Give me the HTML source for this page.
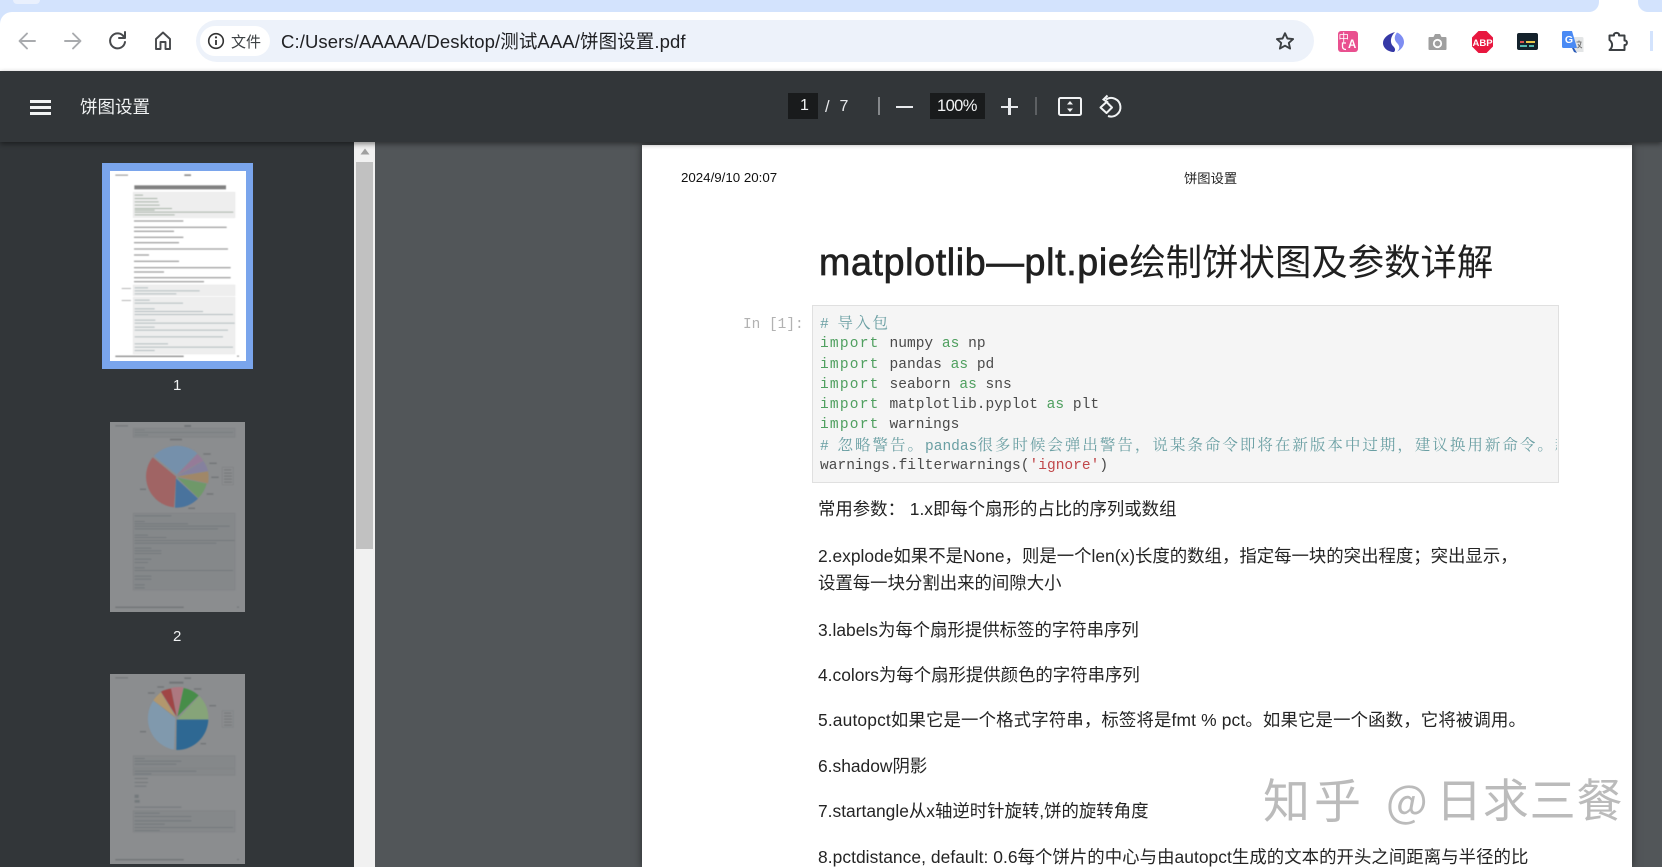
<!DOCTYPE html>
<html lang="zh"><head><meta charset="utf-8"><title>饼图设置</title>
<style>
html,body{margin:0;padding:0;width:1662px;height:867px;overflow:hidden;background:#525659}
body{position:relative;font-family:"Liberation Sans","Noto Sans CJK SC",sans-serif}
.a{position:absolute}
.t{position:absolute;white-space:pre;line-height:1}
.p{font-size:17.4px;color:#242424;left:818px}
.c{font-family:"Liberation Mono","Noto Serif CJK SC",monospace;font-size:14.55px;color:#4a4a4a;left:820px}
.c i{font-style:normal;font-family:"Noto Serif CJK SC",serif;font-size:15.5px;letter-spacing:2px}
.k{color:#4f9f5f}.n{color:#6a9fa3}.s{color:#c0474a}
.k.im{letter-spacing:1.2px}
.w{font-size:47px;color:#bbbbbb;font-family:'WenQuanYi Zen Hei','Noto Sans CJK SC',sans-serif;top:774px}
svg{position:absolute;overflow:visible}
</style></head><body>

<!-- browser top -->
<div class="a" style="left:0;top:0;width:1662px;height:71px;background:#fff"></div>
<div class="a" style="left:0;top:0;width:1599px;height:12px;background:#d3e3fd;border-bottom-right-radius:10px"></div>
<div class="a" style="left:1638px;top:0;width:24px;height:12px;background:#d3e3fd;border-bottom-left-radius:10px"></div>
<div class="a" style="left:13px;top:0;width:27px;height:4px;background:#e9f0fd;border-radius:0 0 6px 6px"></div>
<div class="a" style="left:0;top:12px;width:12px;height:12px;background:#d3e3fd"></div>
<div class="a" style="left:0;top:12px;width:12px;height:12px;background:#fff;border-top-left-radius:12px"></div>

<svg style="left:0;top:0" width="340" height="71" fill="none" stroke-linecap="round" stroke-linejoin="round">
<path d="M35 41H20M27 33.500L19.500 41l7.500 7.500" stroke="#a9abae" stroke-width="1.900"/>
<path d="M65 41H80M73 33.500L80.500 41 73 48.500" stroke="#a9abae" stroke-width="1.900"/>
<path d="M124 37a7.500 7.500 0 1 0 1 5" stroke="#47494c" stroke-width="2"/>
<path d="M125 32v6h-6" stroke="#47494c" stroke-width="2"/>
<path d="M156 39l7-6.500 7 6.500v10h-4.500v-7h-5v7H156z" stroke="#47494c" stroke-width="1.900"/>
</svg>

<div class="a" style="left:196px;top:20px;width:1118px;height:42px;background:#edf2fa;border-radius:21px"></div>
<div class="a" style="left:200px;top:26px;width:70px;height:30px;background:#fff;border-radius:15px"></div>
<svg style="left:207px;top:32px" width="18" height="18" fill="none"><circle cx="9" cy="9" r="7.300" stroke="#333" stroke-width="1.600"/><path d="M9 8v5" stroke="#333" stroke-width="1.800"/><circle cx="9" cy="5.400" r="1.100" fill="#333"/></svg>
<div class="t" style="left:231px;top:35px;font-size:15px;color:#3c4043">文件</div>
<div class="t" id="url" style="left:281px;top:33px;font-size:18.500px;color:#202124;letter-spacing:.1px">C:/Users/AAAAA/Desktop/测试AAA/饼图设置.pdf</div>
<svg style="left:1275px;top:31px" width="20" height="20" fill="none"><path d="M10 2.200l2.400 5.300 5.700.6-4.300 3.800 1.300 5.700L10 14.700l-5.100 2.900 1.300-5.700L1.900 8.100l5.700-.6z" stroke="#3c4043" stroke-width="1.900" stroke-linejoin="round"/></svg>

<!-- extension icons -->
<div class="a" style="left:1338px;top:31px;width:20px;height:21px;background:#e9508f;border-radius:3px"></div>
<div class="t" style="left:1338.500px;top:32.500px;font-size:10.500px;color:#fff">中</div>
<div class="t" style="left:1348px;top:40px;font-size:11.500px;font-weight:bold;color:#fff">A</div>
<svg style="left:1340px;top:42px" width="8" height="10" fill="none"><path d="M6 1H2.500v3.500c0 2 1.500 3 3.500 3" stroke="#fff" stroke-width="1.300"/></svg>
<svg style="left:1382px;top:31px" width="22" height="22"><path d="M13 1C6 3 1 7 1 12c0 5 5 9 11 9 2-2 1-4-1-6C8 12 8 6 13 1z" fill="#3538a6"/><path d="M15 1.500c-3 3.500-3 7.500 0 10.500 3 3 3 6 0 8.500 4-1.500 7-5.500 7-9.500 0-4-3-8-7-9.500z" fill="#7e8df2"/></svg>
<svg style="left:1428px;top:33px" width="19" height="18"><path d="M1.500 4h4l1.500-3h5l1.500 3h4a1 1 0 0 1 1 1v11a1 1 0 0 1-1 1H1.500a1 1 0 0 1-1-1V5a1 1 0 0 1 1-1z" fill="#9f9f9f"/><circle cx="9.500" cy="10.500" r="3.700" fill="none" stroke="#fff" stroke-width="1.800"/></svg>
<svg style="left:1472px;top:31px" width="21" height="22"><path d="M6.500 0h8L21 6.500v9L14.500 22h-8L0 15.500v-9z" fill="#e8173f"/><text x="10.500" y="15" text-anchor="middle" font-family="Liberation Sans,sans-serif" font-weight="bold" font-size="9.500" fill="#fff">ABP</text></svg>
<svg style="left:1517px;top:33px" width="21" height="18"><rect width="21" height="17" rx="2" fill="#14222c"/><rect x="3" y="8" width="4" height="2" fill="#d8534f"/><rect x="9" y="8" width="9" height="2" fill="#e8c64a"/><rect x="3" y="12" width="7" height="2" fill="#56b9b0"/><rect x="12" y="12" width="5" height="2" fill="#56b9b0"/></svg>
<svg style="left:1562px;top:31px" width="22" height="23"><path d="M10 6h10a1.500 1.500 0 0 1 1.500 1.500V21H12z" fill="#e3e5e6"/><path d="M14.500 11h5M17 9.500v1.500M15.500 17c2-1 3-3 3.500-6M16 13c1 2 2 3 4 4" stroke="#777" stroke-width="1" fill="none"/><path d="M1.500 0H10l5 17H1.500A1.500 1.500 0 0 1 0 15.500v-14A1.500 1.500 0 0 1 1.500 0z" fill="#4a8af4"/><path d="M12 17l3 5-3-1-2-4z" fill="#2a5bb8"/><text x="7" y="12" text-anchor="middle" font-family="Liberation Sans,sans-serif" font-weight="bold" font-size="10.500" fill="#fff">G</text></svg>
<svg style="left:1607px;top:30px" width="21" height="22" fill="none"><path d="M2.500 5.500h4.500c-.8-3.500 5.800-3.500 5 0h5.500v5c3.200-.6 3.200 5 0 4.500v5h-15c1.500-1.200 2.600-3 2.600-5 0-2-1.100-3.800-2.600-5z" stroke="#3c4043" stroke-width="2" stroke-linejoin="round"/></svg>
<div class="a" style="left:1650px;top:31px;width:2.500px;height:20px;background:#d3e3fd"></div>

<!-- pdf toolbar -->
<div class="a" style="left:0;top:71px;width:1662px;height:71px;background:#323639;box-shadow:0 2px 5px rgba(0,0,0,.45);z-index:5"></div>
<div style="position:absolute;left:0;top:0;width:1662px;height:867px;z-index:6">
<div class="a" style="left:30px;top:100px;width:21px;height:2.600px;background:#f1f3f4"></div>
<div class="a" style="left:30px;top:106px;width:21px;height:2.600px;background:#f1f3f4"></div>
<div class="a" style="left:30px;top:112px;width:21px;height:2.600px;background:#f1f3f4"></div>
<div class="t" style="left:80px;top:99px;font-size:17.500px;color:#f1f3f4">饼图设置</div>
<div class="a" style="left:788px;top:93px;width:30px;height:26px;background:#191b1c"></div>
<div class="t" style="left:800px;top:98px;font-size:16px;color:#f1f3f4">1</div>
<div class="t" style="left:825px;top:98.500px;font-size:16.500px;color:#e8eaed">/</div>
<div class="t" style="left:839.500px;top:98.500px;font-size:16px;color:#e8eaed">7</div>
<div class="a" style="left:878px;top:97px;width:1.500px;height:18px;background:#85888b"></div>
<div class="a" style="left:896px;top:105.500px;width:17px;height:2.200px;background:#e8eaed"></div>
<div class="a" style="left:930px;top:93px;width:55px;height:26px;background:#191b1c"></div>
<div class="t" style="left:937px;top:98px;font-size:16.500px;color:#f1f3f4;letter-spacing:-.6px">100%</div>
<div class="a" style="left:1001px;top:105.500px;width:17px;height:2.200px;background:#e8eaed"></div>
<div class="a" style="left:1008.400px;top:98px;width:2.200px;height:17px;background:#e8eaed"></div>
<div class="a" style="left:1035px;top:97px;width:1.500px;height:18px;background:#5d6063"></div>
<svg style="left:1057px;top:96px" width="26" height="21" fill="none"><rect x="2" y="2" width="22" height="17" rx="1.500" stroke="#f1f3f4" stroke-width="2"/><path d="M13 5l-3 3.500h6zM13 16l-3-3.500h6z" fill="#f1f3f4"/></svg>
<svg style="left:1098px;top:94px" width="24" height="24" fill="none"><path d="M8 5.500a9.300 9.300 0 1 1 2 16.500" stroke="#f1f3f4" stroke-width="2"/><path d="M9.500 1.500L5.500 5.500l4.500 3" stroke="#f1f3f4" stroke-width="2"/><path d="M8.500 8l5.500 5.500-5.500 5.500L2.500 13.500z" stroke="#f1f3f4" stroke-width="2" stroke-linejoin="round"/></svg>
</div>

<!-- sidebar -->
<div class="a" style="left:0;top:142px;width:354px;height:725px;background:#323639"></div>
<div class="a" style="left:354px;top:142px;width:21px;height:725px;background:#f1f1f1"></div>
<div class="a" style="left:356px;top:162px;width:17px;height:387px;background:#c1c1c1"></div>
<svg style="left:360px;top:148px" width="10" height="7"><path d="M5 0.500L9.500 6.500H.5z" fill="#a0a0a0"/></svg>

<!-- thumb 1 -->
<div class="a" style="left:102px;top:163px;width:151px;height:206px;background:#7aa5ec"></div>
<div class="a" style="left:110px;top:171px;width:136px;height:190px;background:#fff"></div>
<svg style="left:90px;top:150px;filter:blur(.55px)" width="180" height="250" viewBox="0 0 540 750">
<g fill="#8c8c8c">
<rect x="76" y="74" width="38" height="3"/><rect x="283" y="73" width="20" height="5"/>
</g>
<rect x="133" y="106" width="275" height="12" fill="#808080"/>
<rect x="130" y="127" width="305" height="76" fill="#eeeeee" stroke="#ddd"/>
<g fill="#aab5aa"><rect x="134" y="134" width="25" height="3"/><rect x="134" y="144" width="68" height="3"/><rect x="134" y="154" width="72" height="3"/><rect x="134" y="164" width="75" height="3"/><rect x="134" y="174" width="112" height="3"/><rect x="134" y="179" width="60" height="3"/><rect x="134" y="185" width="296" height="3"/><rect x="134" y="193" width="120" height="3"/></g>
<g fill="#a2a2a2">
<rect x="132" y="211" width="148" height="4"/><rect x="132" y="230" width="278" height="4"/><rect x="132" y="242" width="120" height="4"/><rect x="132" y="260" width="148" height="4"/><rect x="132" y="276" width="135" height="4"/><rect x="132" y="295" width="282" height="4"/><rect x="132" y="313" width="45" height="4"/><rect x="132" y="332" width="135" height="4"/><rect x="132" y="351" width="290" height="4"/><rect x="132" y="364" width="90" height="4"/><rect x="132" y="381" width="290" height="4"/><rect x="132" y="393" width="210" height="4"/>
</g>
<rect x="130" y="405" width="305" height="32" fill="#eeeeee" stroke="#ddd"/>
<rect x="130" y="442" width="305" height="170" fill="#eeeeee" stroke="#ddd"/>
<g fill="#b5b5b5"><rect x="95" y="414" width="28" height="3"/><rect x="95" y="450" width="28" height="3"/></g>
<g fill="#b3bcbf"><rect x="134" y="412" width="40" height="3"/><rect x="134" y="421" width="195" height="3"/><rect x="134" y="430" width="125" height="3"/><rect x="134" y="449" width="45" height="3"/><rect x="134" y="458" width="145" height="3"/><rect x="134" y="475" width="60" height="3"/><rect x="134" y="483" width="205" height="3"/><rect x="134" y="492" width="295" height="3"/><rect x="134" y="509" width="62" height="3"/><rect x="134" y="518" width="300" height="3"/><rect x="134" y="530" width="60" height="3"/><rect x="134" y="539" width="280" height="3"/><rect x="134" y="559" width="265" height="3"/><rect x="134" y="580" width="100" height="3"/><rect x="134" y="590" width="295" height="3"/><rect x="134" y="600" width="60" height="3"/></g>
<rect x="76" y="617" width="205" height="4" fill="#8a8a8a"/><rect x="441" y="617" width="6" height="3" fill="#888"/>
</svg>
<div class="t" style="left:173px;top:378px;font-size:15px;color:#f1f3f4">1</div>

<!-- thumb 2 -->
<div class="a" style="left:110px;top:422px;width:135px;height:190px;background:#8b8d8f"></div>
<svg style="left:90px;top:410px;filter:blur(.55px)" width="180" height="250" viewBox="0 0 540 750">
<g fill="#717476"><rect x="76" y="46" width="38" height="3"/><rect x="283" y="45" width="20" height="6"/><rect x="76" y="590" width="205" height="4"/><rect x="441" y="590" width="6" height="3"/></g>
<rect x="130" y="55" width="305" height="27" fill="#85888a" stroke="#797c7e"/>
<g fill="#74797c"><rect x="134" y="59" width="30" height="2"/><rect x="134" y="66" width="295" height="2"/><rect x="134" y="74" width="40" height="2"/></g>
<path d="M260 194L192 138A93 93 0 0 1 322 130Z" fill="#7590ab"/>
<path d="M262 194L322 132A93 93 0 0 1 340 152Z" fill="#957b98"/>
<path d="M262 198L340 153A93 93 0 0 1 354 183Z" fill="#85819e"/>
<path d="M262 200L354 184A93 93 0 0 1 354 220Z" fill="#a08768"/>
<path d="M262 203L350 221A93 93 0 0 1 325 264Z" fill="#6f9869"/>
<path d="M258 205L324 266A93 93 0 0 1 255 293Z" fill="#49739d"/>
<path d="M258 200L252 292A93 93 0 0 1 188 142Z" fill="#a06464"/>
<g fill="#717476"><rect x="240" y="86" width="36" height="5"/><rect x="340" y="130" width="22" height="4"/><rect x="358" y="158" width="22" height="4"/><rect x="364" y="200" width="22" height="4"/><rect x="350" y="250" width="20" height="4"/><rect x="295" y="293" width="20" height="4"/><rect x="150" y="236" width="18" height="4"/></g>
<rect x="397" y="172" width="33" height="52" fill="#8b8d8f" stroke="#777a7c"/>
<g fill="#75787a"><rect x="402" y="178" width="22" height="3"/><rect x="402" y="188" width="24" height="3"/><rect x="402" y="197" width="24" height="3"/><rect x="402" y="206" width="24" height="3"/><rect x="402" y="215" width="24" height="3"/></g>
<rect x="130" y="310" width="305" height="230" fill="#85888a" stroke="#797c7e"/>
<g fill="#74797c"><rect x="134" y="316" width="110" height="3"/><rect x="134" y="333" width="30" height="3"/><rect x="134" y="340" width="160" height="3"/><rect x="134" y="347" width="285" height="3"/><rect x="134" y="355" width="250" height="3"/><rect x="134" y="374" width="40" height="3"/><rect x="134" y="381" width="95" height="3"/><rect x="134" y="390" width="300" height="3"/><rect x="134" y="398" width="245" height="3"/><rect x="134" y="413" width="50" height="3"/><rect x="134" y="421" width="80" height="3"/><rect x="134" y="429" width="80" height="3"/><rect x="134" y="446" width="50" height="3"/><rect x="134" y="456" width="40" height="3"/><rect x="134" y="472" width="30" height="3"/><rect x="134" y="480" width="295" height="3"/><rect x="134" y="497" width="50" height="3"/><rect x="134" y="506" width="50" height="3"/><rect x="134" y="523" width="30" height="3"/><rect x="134" y="532" width="30" height="3"/></g>
</svg>
<div class="t" style="left:173px;top:629px;font-size:15px;color:#f1f3f4">2</div>

<!-- thumb 3 -->
<div class="a" style="left:110px;top:674px;width:135px;height:190px;background:#8b8d8f"></div>
<svg style="left:90px;top:660px;filter:blur(.55px)" width="180" height="207" viewBox="0 0 540 621">
<g fill="#717476"><rect x="76" y="52" width="38" height="3"/><rect x="283" y="52" width="20" height="5"/><rect x="238" y="65" width="42" height="6"/><rect x="76" y="597" width="205" height="4"/><rect x="441" y="597" width="6" height="3"/></g>
<path d="M256 174L190 122A95 95 0 0 0 252 269Z" fill="#8099ad"/>
<path d="M260 179H355A95 95 0 0 1 259 270Z" fill="#2e6893"/>
<path d="M262 178L328 108A95 95 0 0 1 355 178Z" fill="#86a479"/>
<path d="M262 170L326 106A95 95 0 0 0 281 84Z" fill="#478d49"/>
<path d="M262 170L280 82A95 95 0 0 0 243 84Z" fill="#ad7880"/>
<path d="M260 170L243 86A95 95 0 0 0 213 95Z" fill="#a04545"/>
<path d="M258 172L213 97A95 95 0 0 0 190 121Z" fill="#b2976d"/>
<g fill="#717476"><rect x="202" y="79" width="20" height="4"/><rect x="174" y="97" width="20" height="4"/><rect x="312" y="85" width="22" height="4"/><rect x="358" y="135" width="20" height="4"/><rect x="150" y="213" width="18" height="4"/><rect x="332" y="249" width="16" height="4"/></g>
<rect x="397" y="152" width="33" height="50" fill="#8b8d8f" stroke="#797c7e"/>
<g fill="#75787a"><rect x="402" y="158" width="22" height="3"/><rect x="402" y="167" width="24" height="3"/><rect x="402" y="176" width="24" height="3"/><rect x="402" y="185" width="24" height="3"/><rect x="402" y="194" width="24" height="3"/></g>
<rect x="130" y="287" width="305" height="36" fill="#85888a" stroke="#797c7e"/>
<rect x="130" y="326" width="305" height="20" fill="#85888a" stroke="#797c7e"/>
<rect x="130" y="452" width="305" height="64" fill="#85888a" stroke="#797c7e"/>
<g fill="#74797c"><rect x="134" y="294" width="30" height="3"/><rect x="134" y="302" width="140" height="3"/><rect x="134" y="311" width="125" height="3"/><rect x="134" y="332" width="185" height="3"/><rect x="134" y="340" width="50" height="3"/><rect x="134" y="354" width="40" height="3"/><rect x="134" y="366" width="40" height="3"/><rect x="134" y="377" width="35" height="3"/><rect x="134" y="404" width="12" height="10"/><rect x="134" y="420" width="15" height="8"/><rect x="134" y="440" width="140" height="3"/><rect x="134" y="458" width="75" height="3"/><rect x="134" y="468" width="170" height="3"/><rect x="134" y="481" width="170" height="3"/><rect x="134" y="491" width="90" height="3"/><rect x="134" y="501" width="295" height="3"/><rect x="134" y="510" width="75" height="3"/></g>
</svg>

<!-- page -->
<div class="a" style="left:642px;top:145px;width:990px;height:722px;background:#fff;box-shadow:0 0 8px rgba(0,0,0,.5)"></div>
<div class="t" style="left:681px;top:170.500px;font-size:13.300px;color:#111">2024/9/10 20:07</div>
<div class="t" style="left:1184px;top:171.500px;font-size:13.300px;color:#222">饼图设置</div>
<div class="t" style="left:819px;top:244px;font-size:36.400px;color:#202020"><span style="font-size:37.600px;-webkit-text-stroke:.7px #202020;letter-spacing:.65px">matplotlib—plt.pie</span>绘制饼状图及参数详解</div>

<div class="t" style="left:743px;top:318px;font-family:'Liberation Mono',monospace;font-size:14.450px;color:#b2b2b2">In [1]:</div>
<div class="a" style="left:812px;top:305px;width:745px;height:176px;background:#f5f5f5;border:1px solid #e0e0e0;overflow:hidden"></div>
<div class="t c" style="top:315px"><span class="n"># <i>导入包</i></span></div>
<div class="t c" style="top:337px"><span class="k im">import </span>numpy <span class="k">as</span> np</div>
<div class="t c" style="top:358px"><span class="k im">import </span>pandas <span class="k">as</span> pd</div>
<div class="t c" style="top:378px"><span class="k im">import </span>seaborn <span class="k">as</span> sns</div>
<div class="t c" style="top:398px"><span class="k im">import </span>matplotlib.pyplot <span class="k">as</span> plt</div>
<div class="t c" style="top:418px"><span class="k im">import </span>warnings</div>
<div class="t c" style="top:437px;width:737px;overflow:hidden;height:18px"><span class="n"># <i>忽略警告。</i>pandas<i>很多时候会弹出警告，说某条命令即将在新版本中过期，建议换用新命令。新</i></span></div>
<div class="t c" style="top:459px">warnings.filterwarnings(<span class="s">'ignore'</span>)</div>

<div class="t p" style="top:501px">常用参数： 1.x即每个扇形的占比的序列或数组</div>
<div class="t p" style="top:548px">2.explode如果不是None，则是一个len(x)长度的数组，指定每一块的突出程度；突出显示，</div>
<div class="t p" style="top:575px">设置每一块分割出来的间隙大小</div>
<div class="t p" style="top:622px">3.labels为每个扇形提供标签的字符串序列</div>
<div class="t p" style="top:667px">4.colors为每个扇形提供颜色的字符串序列</div>
<div class="t p" style="top:712px;letter-spacing:.15px">5.autopct如果它是一个格式字符串，标签将是fmt % pct。如果它是一个函数，它将被调用。</div>
<div class="t p" style="top:758px">6.shadow阴影</div>
<div class="t p" style="top:803px">7.startangle从x轴逆时针旋转,饼的旋转角度</div>
<div class="t p" style="top:849px;letter-spacing:.05px">8.pctdistance, default: 0.6每个饼片的中心与由autopct生成的文本的开头之间距离与半径的比</div>

<div class="t w" style="left:1263px;letter-spacing:4px">知乎</div>
<div class="t w" style="left:1386px;font-size:44px;top:776px">@</div>
<div class="t w" style="left:1436px;font-size:46px;top:775px;letter-spacing:.8px">日求三餐</div>

</body></html>
